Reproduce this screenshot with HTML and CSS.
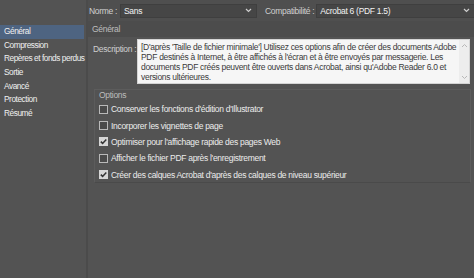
FILE: index.html
```html
<!DOCTYPE html>
<html lang="fr">
<head>
<meta charset="utf-8">
<link rel="stylesheet" href="styles.css">
</head>
<body>
<div class="dialog">
  <nav class="sidebar">
    <div class="nav-item active">Général</div>
    <div class="nav-item">Compression</div>
    <div class="nav-item">Repères et fonds perdus</div>
    <div class="nav-item">Sortie</div>
    <div class="nav-item">Avancé</div>
    <div class="nav-item">Protection</div>
    <div class="nav-item">Résumé</div>
  </nav>
  <main class="content">
    <div class="topbar">
      <span class="label">Norme :</span>
      <div class="select sel-norme"><span>Sans</span><svg class="chev" width="7" height="5" viewBox="0 0 7 5"><path d="M1 1l2.5 2.5L6 1" fill="none" stroke="#cfcfcf" stroke-width="1.2"/></svg></div>
      <span class="label compat">Compatibilité :</span>
      <div class="select sel-compat"><span>Acrobat 6 (PDF 1.5)</span><svg class="chev" width="7" height="5" viewBox="0 0 7 5"><path d="M1 1l2.5 2.5L6 1" fill="none" stroke="#cfcfcf" stroke-width="1.2"/></svg></div>
    </div>
    <div class="section-head">Général</div>
    <div class="desc-row">
      <span class="desc-label">Description :</span>
      <div class="desc-box">
        <p class="desc-text">[D'après 'Taille de fichier minimale'] Utilisez ces options afin de créer des documents Adobe PDF destinés à Internet, à être affichés à l'écran et à être envoyés par messagerie. Les documents PDF créés peuvent être ouverts dans Acrobat, ainsi qu'Adobe Reader 6.0 et versions ultérieures.</p>
        <div class="scroll">
          <svg width="7" height="5" viewBox="0 0 7 5"><path d="M1 4l2.5-2.5L6 4" fill="none" stroke="#b8b8b8" stroke-width="1"/></svg>
          <svg width="7" height="5" viewBox="0 0 7 5"><path d="M1 1l2.5 2.5L6 1" fill="none" stroke="#b8b8b8" stroke-width="1"/></svg>
        </div>
      </div>
    </div>
    <fieldset class="options">
      <div class="opt-title">Options</div>
      <label class="opt"><span class="box"></span>Conserver les fonctions d'édition d'Illustrator</label>
      <label class="opt"><span class="box"></span>Incorporer les vignettes de page</label>
      <label class="opt"><span class="box checked"><svg width="9" height="9" viewBox="0 0 9 9"><path d="M1.8 4.6l1.8 1.8L7.3 2.4" fill="none" stroke="#333" stroke-width="1.5"/></svg></span>Optimiser pour l'affichage rapide des pages Web</label>
      <label class="opt"><span class="box"></span>Afficher le fichier PDF après l'enregistrement</label>
      <label class="opt"><span class="box checked"><svg width="9" height="9" viewBox="0 0 9 9"><path d="M1.8 4.6l1.8 1.8L7.3 2.4" fill="none" stroke="#333" stroke-width="1.5"/></svg></span>Créer des calques Acrobat d'après des calques de niveau supérieur</label>
    </fieldset>
  </main>
</div>
</body>
</html>
```
FILE: styles.css
```css
html, body {
  margin: 0;
  padding: 0;
  background: #535353;
}
body {
  width: 474px;
  height: 278px;
  overflow: hidden;
  font-family: "Liberation Sans", Arial, sans-serif;
  font-size: 8.5px;
  letter-spacing: -0.3px;
  color: #e6e6e6;
}
.dialog {
  display: flex;
  height: 278px;
}
.sidebar {
  flex: none;
  width: 88px;
  padding-top: 25px;
  border-right: 2px solid #4b4b4b;
  box-sizing: border-box;
}
.nav-item {
  height: 13.7px;
  line-height: 13.7px;
  padding-left: 4px;
  color: #f0f0f0;
  white-space: nowrap;
  margin-right: 2px;
  letter-spacing: -0.45px;
  font-size: 8.3px;
}
.nav-item.active {
  background: #4e6481;
}
.content {
  flex: 1;
  min-width: 0;
}
.topbar {
  height: 21px;
  display: flex;
  align-items: center;
  background: #4f4f4f;
}
.label {
  color: #cfcfcf;
  white-space: nowrap;
  width: 31px;
  padding-left: 1px;
  flex: none;
}
.label.compat {
  width: auto;
  padding-left: 8px;
  margin-right: 2px;
}
.select {
  height: 14px;
  background: #464646;
  border: 1px solid #3f3f3f;
  box-sizing: border-box;
  display: flex;
  align-items: center;
  justify-content: space-between;
  padding: 0 4px 0 3px;
  color: #f2f2f2;
  white-space: nowrap;
  flex: none;
}
.sel-norme { width: 137px; }
.sel-compat { width: 159px; }
.section-head {
  height: 16px;
  line-height: 16px;
  background: #4c4c4c;
  padding-left: 4px;
  color: #bdbdbd;
}
.desc-row {
  display: flex;
  align-items: flex-start;
  padding-top: 2px;
  padding-left: 5px;
}
.desc-label {
  color: #cfcfcf;
  width: 44px;
  padding-top: 5px;
  white-space: nowrap;
}
.desc-box {
  width: 333px;
  height: 45px;
  background: #f6f6f6;
  border: 1px solid #d4d4d4;
  box-sizing: border-box;
  display: flex;
  justify-content: space-between;
}
.desc-text {
  margin: 0;
  padding: 2px 0 0 3px;
  color: #3a3a3a;
  line-height: 10px;
  width: 318px;
}
.scroll {
  width: 10px;
  background: #ededed;
  display: flex;
  flex-direction: column;
  justify-content: space-between;
  align-items: center;
  padding: 3px 0;
}
.options {
  margin: 5px 3px 0 6px;
  padding: 0 0 2px 4px;
  border: 1px solid #5c5c5c;
  border-bottom-color: #4a4a4a;
  height: 94px;
  box-sizing: border-box;
}
.opt-title {
  color: #bdbdbd;
  height: 11px;
  line-height: 11px;
  margin-bottom: 0;
}
.opt {
  display: flex;
  align-items: center;
  height: 16.4px;
  color: #ececec;
  white-space: nowrap;
}
.box {
  width: 9px;
  height: 9px;
  box-sizing: border-box;
  border: 1px solid #b9b9b9;
  background: #4a4a4a;
  margin-right: 3px;
  flex: none;
  display: flex;
}
.box.checked {
  background: #d6d6d6;
  border-color: #d6d6d6;
}
.box svg { margin: -1px; }
```
